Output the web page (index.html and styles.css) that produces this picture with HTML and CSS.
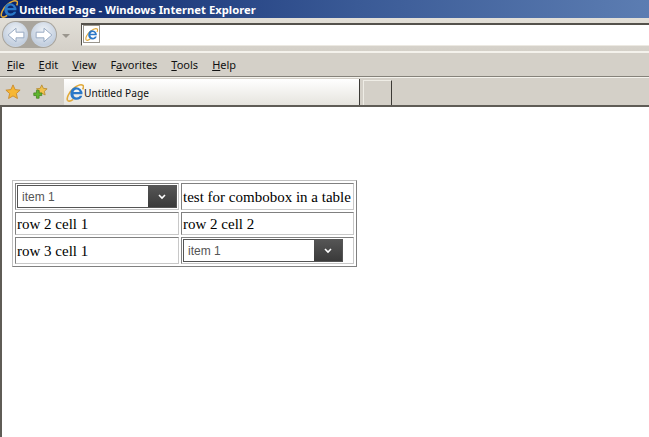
FILE: index.html
```html
<!DOCTYPE html>
<html lang="en">
<head>
    <meta charset="UTF-8">
    <meta name="viewport" content="width=device-width, initial-scale=1.0">
    <title>Untitled Page</title>
    <link rel="stylesheet" href="styles.css">
</head>
<body>

    <!-- Shared icon -->
    <svg class="defs" width="0" height="0">
        <defs>
            <symbol id="ie-logo" viewBox="0 0 20 20">
                <path d="M2 18.500C0 16.500 3 9 8.500 4.800C12.500 1.800 17 .3 18.800 1.500C19.800 2.300 19.500 4 18.500 6" fill="none" stroke="#e0a93a" stroke-width="1.800"/>
                <path d="M2 18.500C3.500 19.500 6 18.500 8 17" fill="none" stroke="#e0a93a" stroke-width="1.800"/>
                <path d="M11 3.500a7.300 7.300 0 0 1 7.300 7.800H8.300c.2 2.400 1.700 3.700 3.700 3.700 1.500 0 2.700-.7 3.300-1.900h2.800c-1 2.900-3.300 4.500-6.200 4.500-4.200 0-7-3-7-6.900 0-4.400 2.800-7.200 6.100-7.200zM8.400 9h6.700c-.1-1.900-1.600-3-3.300-3-1.800 0-3.100 1.200-3.400 3z" fill="#2a78c8"/>
            </symbol>
            <symbol id="nav-arrow" viewBox="0 0 16 14">
                <path d="M1 7L8 1V4.500H15V9.500H8V13Z" fill="#fff" stroke="#8fa3bd" stroke-width=".8"/>
            </symbol>
        </defs>
    </svg>

    <div class="title-bar">
        <svg class="title-icon" width="18" height="18"><use href="#ie-logo"/></svg>
        <span class="title-text">Untitled Page - Windows Internet Explorer</span>
    </div>

    <div class="nav-bar">
        <div class="nav-buttons">
            <div class="nav-btn"><svg width="18" height="16"><use href="#nav-arrow"/></svg></div>
            <div class="nav-btn"><svg class="flip" width="18" height="16"><use href="#nav-arrow"/></svg></div>
        </div>
        <div class="nav-drop"></div>
        <div class="address">
            <div class="page-icon">
                <svg width="13" height="13"><use href="#ie-logo"/></svg>
            </div>
        </div>
    </div>

    <div class="menu-bar">
        <span class="menu-item"><u>F</u>ile</span>
        <span class="menu-item"><u>E</u>dit</span>
        <span class="menu-item"><u>V</u>iew</span>
        <span class="menu-item">F<u>a</u>vorites</span>
        <span class="menu-item"><u>T</u>ools</span>
        <span class="menu-item"><u>H</u>elp</span>
    </div>

    <div class="tab-bar">
        <svg class="star" width="16" height="16" viewBox="0 0 18 18">
            <path d="M9 1l2.400 5.300 5.600.6-4.200 3.800 1.200 5.600L9 13.400l-5 2.900 1.200-5.600L1 6.900l5.600-.6z" fill="#f7b733" stroke="#c98a2b"/>
        </svg>
        <svg class="star-add" width="16" height="16" viewBox="0 0 18 18">
            <path d="M11 1l1.800 3.900 4.200.5-3.100 2.800.9 4.200-3.800-2.100-3.800 2.100.9-4.200L5 5.400l4.200-.5z" fill="#f2c14e" stroke="#b98f35"/>
            <path d="M5 7h3v3h3v3H8v3H5v-3H2v-3h3z" fill="#5fb52e" stroke="#3c7f1a" stroke-width=".8"/>
        </svg>
        <div class="tab">
            <svg width="18" height="18"><use href="#ie-logo"/></svg>
            <span>Untitled Page</span>
        </div>
        <div class="new-tab"></div>
    </div>

    <div class="page">
        <table class="demo">
            <tr>
                <td class="combo-cell">
                    <div class="combo">
                        <span class="combo-text">item 1</span>
                        <span class="combo-btn"><svg width="8" height="6" viewBox="0 0 8 6"><path d="M1 1l3 3 3-3" fill="none" stroke="#fff" stroke-width="1.600"/></svg></span>
                    </div>
                </td>
                <td>test for combobox in a table</td>
            </tr>
            <tr>
                <td>row 2 cell 1</td>
                <td>row 2 cell 2</td>
            </tr>
            <tr>
                <td>row 3 cell 1</td>
                <td class="combo-cell">
                    <div class="combo">
                        <span class="combo-text">item 1</span>
                        <span class="combo-btn"><svg width="8" height="6" viewBox="0 0 8 6"><path d="M1 1l3 3 3-3" fill="none" stroke="#fff" stroke-width="1.600"/></svg></span>
                    </div>
                </td>
            </tr>
        </table>
    </div>

</body>
</html>
```

FILE: styles.css
```css
html, body {
    margin: 0;
    padding: 0;
    height: 100%;
    overflow: hidden;
}

body {
    width: 649px;
    height: 437px;
    display: flex;
    flex-direction: column;
    background-color: #d4d0c8;
    font-family: "Noto Sans", sans-serif;
}

.defs {
    position: absolute;
}

/* Window chrome */
.title-bar {
    height: 18px;
    flex: none;
    display: flex;
    align-items: center;
    background: linear-gradient(to right, #0a246a, #3a5a96 55%, #5c7db2);
}

.title-text {
    margin-left: 1px;
    color: #fff;
    font: bold 11.250px "Noto Sans", sans-serif;
    white-space: nowrap;
}

.nav-bar {
    height: 34px;
    flex: none;
    display: flex;
    align-items: center;
    box-sizing: border-box;
    border-bottom: 1px solid #f4f2ec;
    background: linear-gradient(to bottom, #e2dfd8, #d4d0c8);
}

.nav-buttons {
    display: flex;
    gap: 3px;
    margin-left: 2px;
    padding: 1px;
    border-radius: 14px;
    background-color: #a9a59d;
}

.nav-btn {
    width: 25px;
    height: 25px;
    display: flex;
    align-items: center;
    justify-content: center;
    border-radius: 50%;
    background: radial-gradient(circle at 50% 35%, #eef2f7, #c2cede 70%, #e2e7ed);
}

.flip {
    transform: scaleX(-1);
}

.nav-drop {
    width: 0;
    height: 0;
    margin: 2px 0 0 5px;
    border-left: 4px solid transparent;
    border-right: 4px solid transparent;
    border-top: 4px solid #9a968e;
}

.address {
    flex: 1;
    height: 20px;
    display: flex;
    margin-left: 11px;
    border-top: 2px solid #55524c;
    border-left: 1px solid #55524c;
    border-bottom: 1px solid #ece9e2;
    background-color: #fff;
}

.page-icon {
    width: 15px;
    height: 16px;
    margin: 0 0 0 1px;
    display: flex;
    align-items: center;
    justify-content: center;
    border: 1px solid #9a968e;
    background-color: #fff;
}

.menu-bar {
    height: 25px;
    flex: none;
    display: flex;
    align-items: center;
    box-sizing: border-box;
    padding-left: 7px;
    gap: 14px;
    border-top: 1px solid #f4f2ec;
    border-bottom: 1px solid #85827a;
    font-size: 11px;
    color: #111;
}

.tab-bar {
    height: 30px;
    flex: none;
    display: flex;
    align-items: flex-end;
    box-sizing: border-box;
    border-top: 1px solid #f4f2ec;
    border-bottom: 2px solid #5f5c56;
}

.star, .star-add {
    align-self: center;
    flex: none;
}

.star {
    margin-left: 5px;
}

.star-add {
    margin-left: 11px;
}

.tab {
    width: 296px;
    height: 26px;
    flex: none;
    display: flex;
    align-items: center;
    box-sizing: border-box;
    margin-left: 16px;
    padding: 2px 0 0 2px;
    border-right: 1px solid #3c3a36;
    font-size: 10.200px;
    color: #111;
    background: linear-gradient(to bottom, #fff, #e6e4de);
}

.new-tab {
    width: 27px;
    height: 24px;
    flex: none;
    margin-left: 3px;
    border-top: 1px solid #efede6;
    border-left: 1px solid #efede6;
    border-right: 1px solid #3c3a36;
}

/* Page content */
.page {
    flex: 1;
    box-sizing: border-box;
    padding: 73px 0 0 10px;
    border-left: 2px solid #5f5c56;
    background-color: #fff;
    font-family: "Liberation Serif", serif;
    font-size: 15px;
    line-height: 19px;
    color: #000;
}

.demo {
    border: 1px solid;
    border-color: #c0c0c0 #808080 #808080 #c0c0c0;
    border-spacing: 2px;
}

.demo td {
    padding: 2px 2px 0 1px;
    border: 1px solid;
    border-color: #808080 #c8c8c8 #c8c8c8 #808080;
    white-space: nowrap;
}

.demo .combo-cell {
    padding: 1px;
}

.combo {
    width: 160px;
    height: 23px;
    display: flex;
    align-items: center;
    justify-content: space-between;
    box-sizing: border-box;
    border: 1px solid #555;
    font-family: "Liberation Sans", sans-serif;
    font-size: 12px;
    color: #555;
    background-color: #fff;
}

.combo-text {
    padding: 2px 0 0 4px;
}

.combo-btn {
    width: 28px;
    height: 100%;
    display: flex;
    align-items: center;
    justify-content: center;
    background: linear-gradient(to bottom, #555, #3a3a3a);
}
```
